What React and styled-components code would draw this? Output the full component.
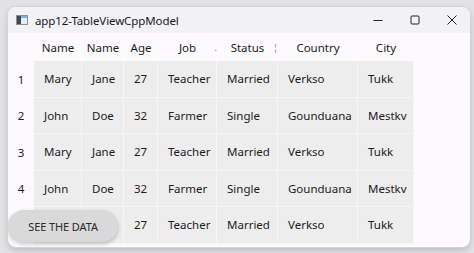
import React from 'react';
import styled, { createGlobalStyle } from 'styled-components';

const GlobalStyle = createGlobalStyle`
  html, body {
    margin: 0;
    padding: 0;
    background: #e2e2e4;
  }
  body {
    font-family: "Noto Sans", "Open Sans", sans-serif;
    color: #1b1b1b;
  }
`;

const COLUMNS = [
  { key: 'first', title: 'Name', width: 48 },
  { key: 'last', title: 'Name', width: 42 },
  { key: 'age', title: 'Age', width: 34 },
  { key: 'job', title: 'Job', width: 59, marker: '.' },
  { key: 'status', title: 'Status', width: 61, marker: '¦' },
  { key: 'country', title: 'Country', width: 80 },
  { key: 'city', title: 'City', width: 56 },
];

const PEOPLE = [
  { first: 'Mary', last: 'Jane', age: 27, job: 'Teacher', status: 'Married', country: 'Verkso', city: 'Tukk' },
  { first: 'John', last: 'Doe', age: 32, job: 'Farmer', status: 'Single', country: 'Gounduana', city: 'Mestkv' },
];

const ROWS = [0, 1, 0, 1, 0].map((i) => PEOPLE[i]);

const Page = styled.div`
  padding: 7px 4px 6px 8px;
  height: 253px;
  box-sizing: border-box;
  overflow: hidden;
`;

const Window = styled.div`
  width: 462px;
  height: 240px;
  border-radius: 8px;
  overflow: hidden;
  display: flex;
  flex-direction: column;
  background: #fcfafd;
  box-shadow: 0 0 0 1px #d4d4d6, 0 3px 6px rgba(0, 0, 0, 0.18);
`;

const TitleBar = styled.div`
  height: 26px;
  flex-shrink: 0;
  display: flex;
  align-items: center;
  background: #f2f1f6;
  padding-left: 8px;
`;

const AppIcon = styled.svg`
  width: 12px;
  height: 10px;
  margin-right: 7px;
`;

const Title = styled.div`
  flex: 1;
  font-size: 11.5px;
  color: #1a1a1a;
  letter-spacing: -0.1px;
`;

const Controls = styled.div`
  display: flex;
  height: 100%;
`;

const ControlButton = styled.div`
  width: 37px;
  height: 100%;
  display: flex;
  align-items: center;
  justify-content: center;
  color: #222;
`;

const Content = styled.div`
  flex: 1;
  position: relative;
  overflow: hidden;
`;

const Grid = styled.div`
  display: grid;
  grid-template-columns: 26px ${({ $widths }) => $widths.map((w) => `${w}px`).join(' ')};
  grid-template-rows: 28px repeat(5, 36.5px);
  font-size: 11.5px;
`;

const HeaderCell = styled.div`
  position: relative;
  display: flex;
  align-items: center;
  justify-content: center;
  color: #1b1b1b;
`;

const Marker = styled.span`
  position: absolute;
  right: 0;
  top: 10px;
  font-size: 9px;
  color: #777;
  line-height: 1;
`;

const RowNumber = styled.div`
  display: flex;
  align-items: center;
  justify-content: center;
  color: #1b1b1b;
`;

const Cell = styled.div`
  display: flex;
  align-items: center;
  padding-left: 10px;
  background: #ededed;
  border-right: 1px solid #f6f6f6;
  border-bottom: 1px solid #f6f6f6;
  white-space: nowrap;
  overflow: hidden;
`;

const FloatingButton = styled.button`
  position: absolute;
  left: 0;
  top: 177px;
  width: 110px;
  height: 32px;
  border: none;
  border-radius: 16px;
  background: #d9d9da;
  box-shadow: 0 2px 4px rgba(0, 0, 0, 0.22);
  font-family: "Noto Sans", "Open Sans", sans-serif;
  font-size: 11px;
  color: #2a2a2a;
  letter-spacing: -0.1px;
  padding: 0;
`;

const Minimize = () => (
  <svg width="10" height="10" viewBox="0 0 10 10">
    <path d="M0.5 5.5 H9.5" stroke="#222" strokeWidth="1" />
  </svg>
);

const Maximize = () => (
  <svg width="10" height="10" viewBox="0 0 10 10">
    <rect x="1" y="1" width="8" height="8" rx="1" fill="none" stroke="#222" strokeWidth="1" />
  </svg>
);

const Close = () => (
  <svg width="10" height="10" viewBox="0 0 10 10">
    <path d="M0.5 0.5 L9.5 9.5 M9.5 0.5 L0.5 9.5" stroke="#222" strokeWidth="1" />
  </svg>
);

export default function App() {
  return (
    <>
      <GlobalStyle />
      <Page>
        <Window>
          <TitleBar>
            <AppIcon viewBox="0 0 12 10">
              <rect x="0.5" y="0.5" width="11" height="9" fill="#e9ecef" stroke="#8a9199" />
              <rect x="1" y="1" width="4" height="8" fill="#3c4a57" />
              <rect x="5" y="1" width="6" height="2" fill="#7fb6d8" />
            </AppIcon>
            <Title>app12-TableViewCppModel</Title>
            <Controls>
              <ControlButton><Minimize /></ControlButton>
              <ControlButton><Maximize /></ControlButton>
              <ControlButton><Close /></ControlButton>
            </Controls>
          </TitleBar>
          <Content>
            <Grid $widths={COLUMNS.map((c) => c.width)}>
              <HeaderCell />
              {COLUMNS.map((c) => (
                <HeaderCell key={c.key}>
                  {c.title}
                  {c.marker && <Marker>{c.marker}</Marker>}
                </HeaderCell>
              ))}
              {ROWS.map((row, i) => (
                <React.Fragment key={i}>
                  <RowNumber>{i + 1}</RowNumber>
                  {COLUMNS.map((c) => (
                    <Cell key={c.key}>{row[c.key]}</Cell>
                  ))}
                </React.Fragment>
              ))}
            </Grid>
            <FloatingButton>SEE THE DATA</FloatingButton>
          </Content>
        </Window>
      </Page>
    </>
  );
}
